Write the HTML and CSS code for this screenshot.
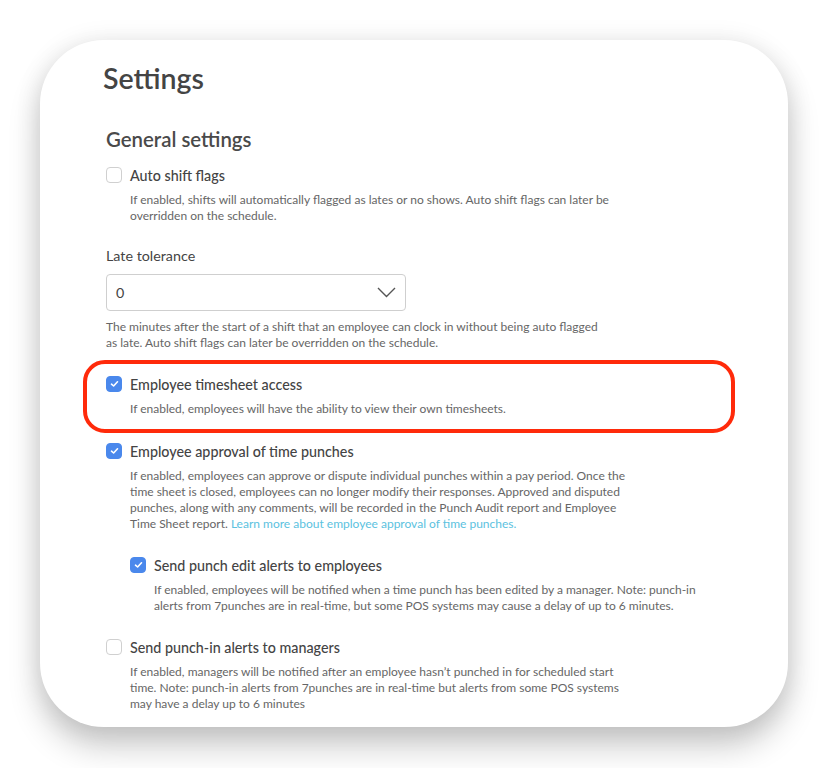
FILE: index.html
```html
<!DOCTYPE html>
<html lang="en">
<head>
<meta charset="utf-8">
<title>Settings</title>
<link rel="stylesheet" href="styles.css">
</head>
<body>
<div class="card">
  <h1 class="title">Settings</h1>
  <section class="section">
    <h2 class="section-title">General settings</h2>

    <div class="setting">
      <label class="check-row"><span class="checkbox"></span><span class="check-label">Auto shift flags</span></label>
      <p class="desc indent">If enabled, shifts will automatically flagged as lates or no shows. Auto shift flags can later be<br>overridden on the schedule.</p>
    </div>

    <div class="setting field">
      <div class="field-label">Late tolerance</div>
      <div class="select">
        <span class="select-value">0</span>
        <svg class="chevron" width="19" height="11" viewBox="0 0 19 11"><path d="M1 1 L9.5 9.5 L18 1" fill="none" stroke="#555" stroke-width="1.4"/></svg>
      </div>
      <p class="desc">The minutes after the start of a shift that an employee can clock in without being auto flagged<br>as late. Auto shift flags can later be overridden on the schedule.</p>
    </div>

    <div class="setting highlighted">
      <label class="check-row"><span class="checkbox checked"><svg width="9" height="8" viewBox="0 0 9 8"><path d="M1.5 4.2 L3.6 6 L7.5 1.8" fill="none" stroke="#fff" stroke-width="1.6" stroke-linecap="round" stroke-linejoin="round"/></svg></span><span class="check-label">Employee timesheet access</span></label>
      <p class="desc indent">If enabled, employees will have the ability to view their own timesheets.</p>
    </div>

    <div class="setting tight">
      <label class="check-row"><span class="checkbox checked"><svg width="9" height="8" viewBox="0 0 9 8"><path d="M1.5 4.2 L3.6 6 L7.5 1.8" fill="none" stroke="#fff" stroke-width="1.6" stroke-linecap="round" stroke-linejoin="round"/></svg></span><span class="check-label">Employee approval of time punches</span></label>
      <p class="desc indent">If enabled, employees can approve or dispute individual punches within a pay period. Once the<br>time sheet is closed, employees can no longer modify their responses. Approved and disputed<br>punches, along with any comments, will be recorded in the Punch Audit report and Employee<br>Time Sheet report. <a class="link" href="#">Learn more about employee approval of time punches.</a></p>

      <div class="setting nested">
        <label class="check-row"><span class="checkbox checked"><svg width="9" height="8" viewBox="0 0 9 8"><path d="M1.5 4.2 L3.6 6 L7.5 1.8" fill="none" stroke="#fff" stroke-width="1.6" stroke-linecap="round" stroke-linejoin="round"/></svg></span><span class="check-label">Send punch edit alerts to employees</span></label>
        <p class="desc indent">If enabled, employees will be notified when a time punch has been edited by a manager. Note: punch-in<br>alerts from 7punches are in real-time, but some POS systems may cause a delay of up to 6 minutes.</p>
      </div>
    </div>

    <div class="setting last">
      <label class="check-row"><span class="checkbox"></span><span class="check-label">Send punch-in alerts to managers</span></label>
      <p class="desc indent">If enabled, managers will be notified after an employee hasn’t punched in for scheduled start<br>time. Note: punch-in alerts from 7punches are in real-time but alerts from some POS systems<br>may have a delay up to 6 minutes</p>
    </div>
  </section>
</div>
</body>
</html>
```

FILE: styles.css
```css
html, body {
  margin: 0;
  padding: 0;
  background: #ffffff;
}
body {
  font-family: Lato, "Open Sans", Arial, sans-serif;
  color: #444;
  width: 828px;
  height: 768px;
  overflow: hidden;
}
.card {
  margin: 40px 0 0 40px;
  width: 748px;
  height: 687px;
  box-sizing: border-box;
  background: #fff;
  border-radius: 64px;
  box-shadow: 0 20px 32px rgba(0, 0, 0, 0.2), 0 2px 26px rgba(0, 0, 0, 0.1);
  padding: 22px 0 0 63px;
  overflow: hidden;
}
.title {
  margin: 0;
  font-size: 28.5px;
  line-height: 32px;
  font-weight: 600;
  color: #444;
}
.section {
  padding-left: 3px;
  margin-top: 33px;
}
.section-title {
  margin: 0;
  font-size: 20.4px;
  line-height: 24px;
  font-weight: 600;
  color: #4a4a4a;
}
.setting {
  margin-top: 14px;
}
.setting.field {
  margin-top: 22px;
}
.setting.highlighted {
  position: relative;
  margin-top: 23px;
}
.setting.highlighted::before {
  content: "";
  position: absolute;
  left: -23px;
  top: -14px;
  width: 652px;
  bottom: -16px;
  border: 4px solid #ff2a0a;
  border-radius: 22px;
  box-sizing: border-box;
  pointer-events: none;
}
.setting.tight {
  margin-top: 24px;
}
.setting.nested {
  margin-top: 23px;
  padding-left: 24px;
}
.setting.last {
  margin-top: 23px;
}
.check-row {
  display: flex;
  align-items: center;
  gap: 8px;
  height: 20px;
}
.checkbox {
  width: 16px;
  height: 16px;
  box-sizing: border-box;
  border: 1px solid #d0d0d0;
  border-radius: 4px;
  background: #fff;
  display: flex;
  align-items: center;
  justify-content: center;
  flex: none;
}
.checkbox.checked {
  background: #4a88ec;
  border-color: #4a88ec;
}
.check-label {
  font-size: 14.3px;
  font-weight: 500;
  color: #444;
}
.desc {
  margin: 7px 0 0;
  font-size: 12px;
  line-height: 16px;
  color: #666;
  white-space: nowrap;
}
.desc.indent {
  padding-left: 24px;
}
.field-label {
  font-size: 14.3px;
  line-height: 20px;
  color: #444;
}
.select {
  margin-top: 8px;
  width: 300px;
  height: 37px;
  box-sizing: border-box;
  border: 1px solid #cfcfcf;
  border-radius: 4px;
  display: flex;
  align-items: center;
  justify-content: space-between;
  padding: 0 9px 0 9px;
}
.select-value {
  font-size: 14.3px;
  color: #444;
}
.chevron {
  display: block;
}
.field .desc {
  margin-top: 8px;
}
.link {
  color: #5bc2e0;
  text-decoration: none;
}
```
